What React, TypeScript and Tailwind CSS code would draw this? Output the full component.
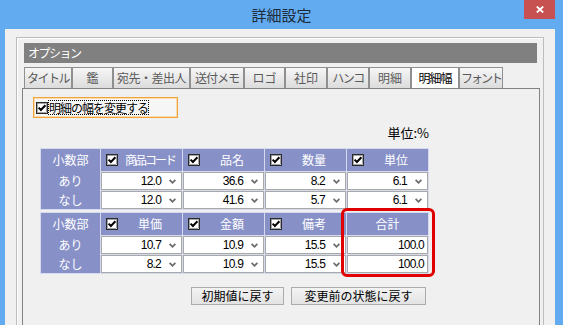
import React from "react";

function CheckBox() {
  return (
    <svg width="12" height="12" viewBox="0 0 12 12" className="block shrink-0">
      <rect x="0.5" y="0.5" width="11" height="11" fill="#ffffff" stroke="#2a2a2a" />
      <rect x="1.5" y="1.5" width="9" height="9" fill="none" stroke="#6a6a6a" strokeWidth="0.6" />
      <path d="M2.6 5.6 L4.9 8 L9.4 3.2" fill="none" stroke="#000000" strokeWidth="2" />
    </svg>
  );
}

function Chevron() {
  return (
    <svg width="7" height="5" viewBox="0 0 7 5" className="block shrink-0">
      <path d="M0.6 0.8 L3.5 3.8 L6.4 0.8" fill="none" stroke="#6b6b6b" strokeWidth="1.7" />
    </svg>
  );
}

type Col = { label: string; a: string; n: string; check: boolean; cls: string };

const t1: Col[] = [
  { label: "商品コード", a: "12.0", n: "12.0", check: true, cls: "tracking-[-2px]" },
  { label: "品名", a: "36.6", n: "41.6", check: true, cls: "" },
  { label: "数量", a: "8.2", n: "5.7", check: true, cls: "" },
  { label: "単位", a: "6.1", n: "6.1", check: true, cls: "" },
];

const t2: Col[] = [
  { label: "単価", a: "10.7", n: "8.2", check: true, cls: "" },
  { label: "金額", a: "10.9", n: "10.9", check: true, cls: "" },
  { label: "備考", a: "15.5", n: "15.5", check: true, cls: "" },
  { label: "合計", a: "100.0", n: "100.0", check: false, cls: "" },
];

function DataCell({ value, chevron }: { value: string; chevron: boolean }) {
  return (
    <div
      className={
        "bg-white border border-[#a9a9a9] flex items-center justify-end text-[12px] leading-none text-black font-['Liberation_Sans',sans-serif] tracking-[-0.8px] " +
        (chevron ? "pr-[5px]" : "pr-[3px]")
      }
    >
      <span>{value}</span>
      {chevron && (
        <span className="ml-[8px]">
          <Chevron />
        </span>
      )}
    </div>
  );
}

function Table({ cols }: { cols: Col[] }) {
  return (
    <div className="grid w-fit grid-cols-[59px_81px_81px_81px_81px] grid-rows-[22px_18px_18px] gap-[1px] p-[1px] bg-[#d6daee]">
      <div className="row-span-3 bg-[#8791c8] grid grid-rows-[22px_18px_18px] gap-[1px] text-white text-[12px] leading-none">
        <div className="flex items-center justify-center">小数部</div>
        <div className="flex items-center justify-center">あり</div>
        <div className="flex items-center justify-center">なし</div>
      </div>
      {cols.map((c) => (
        <div key={"h" + c.label} className="bg-[#8791c8] flex items-center text-white text-[12px] leading-none">
          {c.check ? (
            <>
              <span className="ml-[5px]">
                <CheckBox />
              </span>
              <span className={"flex-1 text-center " + c.cls}>{c.label}</span>
            </>
          ) : (
            <span className="flex-1 text-center">{c.label}</span>
          )}
        </div>
      ))}
      {cols.map((c) => (
        <DataCell key={"a" + c.label} value={c.a} chevron={c.check} />
      ))}
      {cols.map((c) => (
        <DataCell key={"n" + c.label} value={c.n} chevron={c.check} />
      ))}
    </div>
  );
}

const tabs: { label: string; w: string; active?: boolean; cls: string }[] = [
  { label: "タイトル", w: "w-[48px]", cls: "tracking-[-1.5px]" },
  { label: "鑑", w: "w-[41px]", cls: "" },
  { label: "宛先・差出人", w: "w-[77px]", cls: "tracking-[-0.5px]" },
  { label: "送付メモ", w: "w-[54px]", cls: "tracking-[-1px]" },
  { label: "ロゴ", w: "w-[41px]", cls: "" },
  { label: "社印", w: "w-[42px]", cls: "" },
  { label: "ハンコ", w: "w-[42px]", cls: "tracking-[-1.5px]" },
  { label: "明細", w: "w-[42px]", cls: "" },
  { label: "明細幅", w: "w-[48px]", active: true, cls: "tracking-[-1px]" },
  { label: "フォント", w: "w-[44px]", cls: "tracking-[-2px]" },
];

export default function App() {
  return (
    <div className="w-[563px] h-[325px] overflow-hidden bg-[#62abf0] flex flex-col font-['Noto_Sans_CJK_JP',sans-serif]">
      {/* title bar */}
      <div className="h-[29px] shrink-0 grid grid-cols-[1fr_auto_1fr]">
        <div />
        <div className="flex items-center text-[15px] leading-none text-[#1d2b3a]">詳細設定</div>
        <div className="flex justify-end pr-[8px]">
          <div className="w-[31px] h-[19px] bg-[#c75050] flex items-center justify-center">
            <svg width="8" height="7" viewBox="0 0 8 7" className="block">
              <path d="M0.8 0.5 L7.2 6.5 M7.2 0.5 L0.8 6.5" stroke="#ffffff" strokeWidth="1.8" />
            </svg>
          </div>
        </div>
      </div>

      {/* window body */}
      <div className="flex-1 ml-[5px] mr-[8px] bg-[#f0f0f0] pt-[8px] px-[11px]">
        <div className="h-[320px] border border-[#bcbcbc] shadow-[inset_1px_1px_0_#ffffff] flex flex-col">
          <div className="mt-[5px] ml-[7px] mr-[6px] h-[20px] bg-[#808080] text-white text-[12px] leading-none pl-[4px] flex items-center tracking-[-1.5px]">
            オプション
          </div>

          <div className="mt-[4px] ml-[7px] flex h-[21px]">
            {tabs.map((t) => (
              <div
                key={t.label}
                className={
                  t.w +
                  " border border-b-0 border-[#8f8f8f] flex items-center justify-center text-[12px] leading-none " +
                  (t.active
                    ? "bg-white text-black "
                    : "bg-linear-to-b from-[#f6f6f6] to-[#dcdcdc] text-[#5a5a5a] ") +
                  t.cls
                }
              >
                {t.label}
              </div>
            ))}
          </div>

          <div className="ml-[5px] mr-[3px] flex-1 border border-[#828282] bg-[#f0f0f0] flex flex-col items-start">
            {/* checkbox with focus frame */}
            <div className="mt-[8px] ml-[10px] w-[145px] h-[21px] border border-[#f0a43a] shadow-[inset_0_0_0_1px_#fcdcae] bg-[#f6f6f6] flex items-center pl-[2px]">
              <CheckBox />
              <span className="h-[15px] border border-dotted border-[#000000] flex items-center px-[0px] text-[12px] leading-none tracking-[-1px] text-black">
                明細の幅を変更する
              </span>
            </div>

            <div className="ml-[17px] w-[389px] relative">
              <div className="mt-[8px] h-[14px] text-right text-[13px] leading-[14px] text-black">単位:%</div>
              <div className="mt-[8px]">
                <Table cols={t1} />
              </div>
              <div className="mt-[2px]">
                <Table cols={t2} />
              </div>
              <div className="flex gap-[7px] ml-[151px] mt-[13px]">
                <div className="w-[93px] h-[18px] border border-[#acacac] bg-linear-to-b from-[#f3f3f3] to-[#e3e3e3] flex items-center justify-center text-[12px] leading-none text-black">
                  初期値に戻す
                </div>
                <div className="w-[135px] h-[18px] border border-[#acacac] bg-linear-to-b from-[#f3f3f3] to-[#e3e3e3] flex items-center justify-center text-[12px] leading-none text-black">
                  変更前の状態に戻す
                </div>
              </div>
              <div className="absolute left-[301px] top-[90px] w-[94px] h-[69px] border-[3px] border-[#e00000] rounded-[6px] pointer-events-none" />
            </div>
          </div>
        </div>
      </div>
    </div>
  );
}
